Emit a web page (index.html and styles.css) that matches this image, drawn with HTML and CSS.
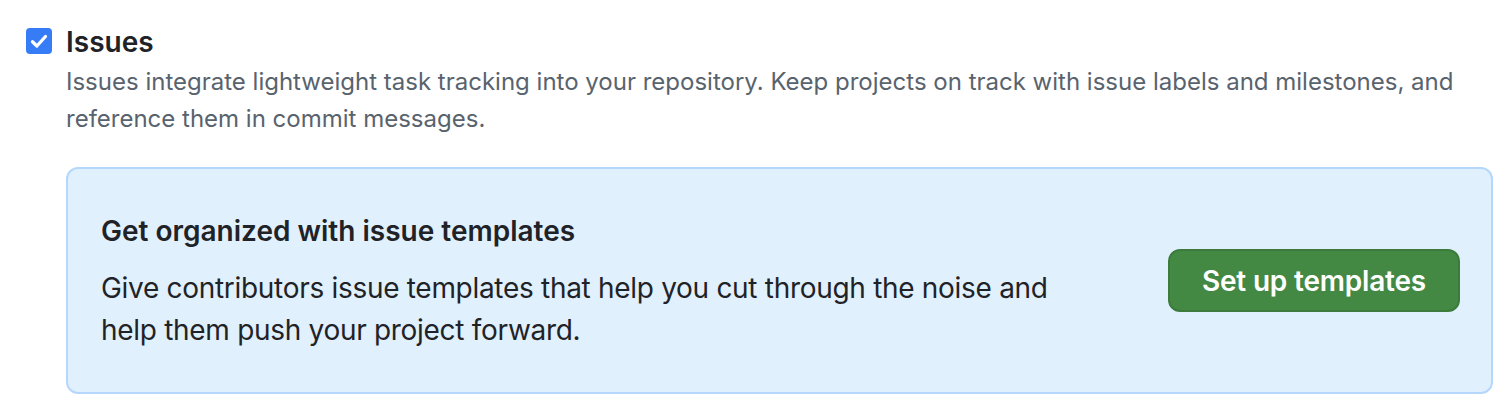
FILE: index.html
```html
<!DOCTYPE html>
<html lang="en">
<head>
  <meta charset="UTF-8" />
  <meta name="viewport" content="width=device-width, initial-scale=1.0" />
  <title>Features</title>
  <link rel="stylesheet" href="styles.css">
</head>
<body>
  <div class="feature">
    <span class="checkbox">
      <svg viewBox="0 0 16 16" width="20" height="20">
        <path d="M2.8 8.6 6.3 12 13.2 4.4" fill="none" stroke="#fff" stroke-width="2.6" stroke-linecap="round" stroke-linejoin="round" />
      </svg>
    </span>
    <div class="feature-body">
      <div class="feature-title">Issues</div>
      <p class="note">Issues integrate lightweight task tracking into your repository. Keep projects on track with issue labels and milestones, and reference them in commit messages.</p>

      <div class="callout">
        <div class="callout-text">
          <h3>Get organized with issue templates</h3>
          <p>Give contributors issue templates that help you cut through the noise and help them push your project forward.</p>
        </div>
        <button class="btn-primary">Set up templates</button>
      </div>
    </div>
  </div>
</body>
</html>
```

FILE: styles.css
```css
* {
  box-sizing: border-box;
}
body {
  margin: 0;
  background: #fff;
  font-family: Inter, 'Noto Sans', sans-serif;
  color: #1f2328;
}
.feature {
  display: flex;
  padding: 21px 19px 0 26px;
}
.checkbox {
  flex: none;
  width: 26px;
  height: 26px;
  margin-top: 7px;
  margin-right: 14px;
  border-radius: 4px;
  background: #367cf6;
  display: flex;
  align-items: center;
  justify-content: center;
}
.feature-body {
  flex: 1;
}
.feature-title {
  font-size: 28px;
  font-weight: 600;
  line-height: 42px;
}
.note {
  margin: 0;
  font-size: 24px;
  line-height: 37px;
  color: #59636e;
}
.callout {
  margin-top: 30px;
  display: flex;
  align-items: center;
  justify-content: space-between;
  padding: 41px 31px 41px 33px;
  background: #e1f0fd;
  border: 2px solid #b5d7fb;
  border-radius: 12px;
}
.callout-text {
  max-width: 980px;
}
.callout h3 {
  margin: 0 0 15px;
  font-size: 28px;
  font-weight: 600;
  line-height: 42px;
}
.callout p {
  margin: 0;
  font-size: 28px;
  line-height: 42px;
  letter-spacing: -0.3px;
}
.btn-primary {
  flex: none;
  height: 63px;
  padding: 0 32px;
  font-family: inherit;
  font-size: 28px;
  font-weight: 600;
  letter-spacing: -0.2px;
  color: #fff;
  background: #438843;
  border: 2px solid #3c7b3c;
  border-radius: 12px;
  cursor: pointer;
}
```
